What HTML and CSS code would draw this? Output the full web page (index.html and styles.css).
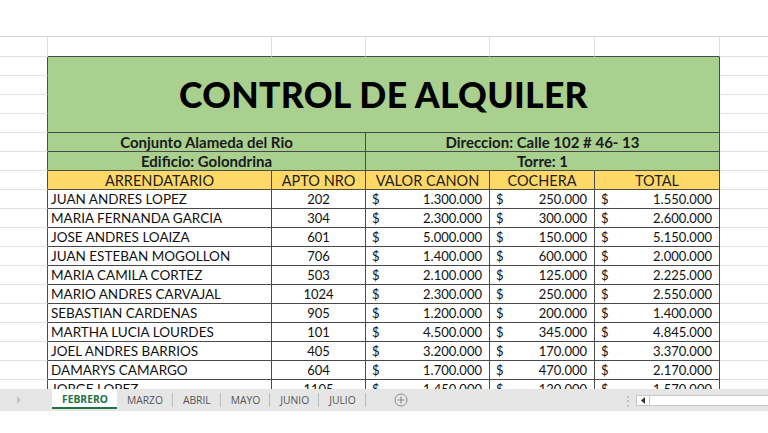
FILE: index.html
```html
<!DOCTYPE html>
<html lang="es">
<head>
<meta charset="utf-8">
<title>Control de alquiler</title>
<link rel="stylesheet" href="styles.css">
</head>
<body>
<div class="top"></div>
<div class="sheet">
<table class="grid">
<colgroup>
<col class="c-g"><col class="c-name"><col class="c-apto"><col class="c-val"><col class="c-coch"><col class="c-tot"><col class="c-g2">
</colgroup>
<tr class="r0"><td class="gut"></td><td class="blank"></td><td class="blank"></td><td class="blank"></td><td class="blank"></td><td class="blank"></td><td class="gut"></td></tr>
<tr><td class="gut edge"></td><td class="c title" colspan="5" rowspan="4">CONTROL DE ALQUILER</td><td class="gut"></td></tr>
<tr><td class="gut edge"></td><td class="gut"></td></tr>
<tr><td class="gut edge"></td><td class="gut"></td></tr>
<tr><td class="gut edge"></td><td class="gut"></td></tr>
<tr><td class="gut edge"></td><td class="c info" colspan="2">Conjunto Alameda del Rio</td><td class="c info" colspan="3">Direccion: Calle 102 # 46- 13</td><td class="gut"></td></tr>
<tr><td class="gut edge"></td><td class="c info" colspan="2">Edificio: Golondrina</td><td class="c info" colspan="3">Torre: 1</td><td class="gut"></td></tr>
<tr><td class="gut edge"></td><td class="c head">ARRENDATARIO</td><td class="c head">APTO NRO</td><td class="c head">VALOR CANON</td><td class="c head">COCHERA</td><td class="c head">TOTAL</td><td class="gut"></td></tr>
<tr><td class="gut edge"></td><td class="c name">JUAN ANDRES LOPEZ</td><td class="c apto">202</td><td class="c"><div class="cur"><span>$</span><span>1.300.000</span></div></td><td class="c"><div class="cur"><span>$</span><span>250.000</span></div></td><td class="c"><div class="cur"><span>$</span><span>1.550.000</span></div></td><td class="gut"></td></tr>
<tr><td class="gut edge"></td><td class="c name">MARIA FERNANDA GARCIA</td><td class="c apto">304</td><td class="c"><div class="cur"><span>$</span><span>2.300.000</span></div></td><td class="c"><div class="cur"><span>$</span><span>300.000</span></div></td><td class="c"><div class="cur"><span>$</span><span>2.600.000</span></div></td><td class="gut"></td></tr>
<tr><td class="gut edge"></td><td class="c name">JOSE ANDRES LOAIZA</td><td class="c apto">601</td><td class="c"><div class="cur"><span>$</span><span>5.000.000</span></div></td><td class="c"><div class="cur"><span>$</span><span>150.000</span></div></td><td class="c"><div class="cur"><span>$</span><span>5.150.000</span></div></td><td class="gut"></td></tr>
<tr><td class="gut edge"></td><td class="c name">JUAN ESTEBAN MOGOLLON</td><td class="c apto">706</td><td class="c"><div class="cur"><span>$</span><span>1.400.000</span></div></td><td class="c"><div class="cur"><span>$</span><span>600.000</span></div></td><td class="c"><div class="cur"><span>$</span><span>2.000.000</span></div></td><td class="gut"></td></tr>
<tr><td class="gut edge"></td><td class="c name">MARIA CAMILA CORTEZ</td><td class="c apto">503</td><td class="c"><div class="cur"><span>$</span><span>2.100.000</span></div></td><td class="c"><div class="cur"><span>$</span><span>125.000</span></div></td><td class="c"><div class="cur"><span>$</span><span>2.225.000</span></div></td><td class="gut"></td></tr>
<tr><td class="gut edge"></td><td class="c name">MARIO ANDRES CARVAJAL</td><td class="c apto">1024</td><td class="c"><div class="cur"><span>$</span><span>2.300.000</span></div></td><td class="c"><div class="cur"><span>$</span><span>250.000</span></div></td><td class="c"><div class="cur"><span>$</span><span>2.550.000</span></div></td><td class="gut"></td></tr>
<tr><td class="gut edge"></td><td class="c name">SEBASTIAN CARDENAS</td><td class="c apto">905</td><td class="c"><div class="cur"><span>$</span><span>1.200.000</span></div></td><td class="c"><div class="cur"><span>$</span><span>200.000</span></div></td><td class="c"><div class="cur"><span>$</span><span>1.400.000</span></div></td><td class="gut"></td></tr>
<tr><td class="gut edge"></td><td class="c name">MARTHA LUCIA LOURDES</td><td class="c apto">101</td><td class="c"><div class="cur"><span>$</span><span>4.500.000</span></div></td><td class="c"><div class="cur"><span>$</span><span>345.000</span></div></td><td class="c"><div class="cur"><span>$</span><span>4.845.000</span></div></td><td class="gut"></td></tr>
<tr><td class="gut edge"></td><td class="c name">JOEL ANDRES BARRIOS</td><td class="c apto">405</td><td class="c"><div class="cur"><span>$</span><span>3.200.000</span></div></td><td class="c"><div class="cur"><span>$</span><span>170.000</span></div></td><td class="c"><div class="cur"><span>$</span><span>3.370.000</span></div></td><td class="gut"></td></tr>
<tr><td class="gut edge"></td><td class="c name">DAMARYS CAMARGO</td><td class="c apto">604</td><td class="c"><div class="cur"><span>$</span><span>1.700.000</span></div></td><td class="c"><div class="cur"><span>$</span><span>470.000</span></div></td><td class="c"><div class="cur"><span>$</span><span>2.170.000</span></div></td><td class="gut"></td></tr>
<tr><td class="gut edge"></td><td class="c name">JORGE LOPEZ</td><td class="c apto">1105</td><td class="c"><div class="cur"><span>$</span><span>1.450.000</span></div></td><td class="c"><div class="cur"><span>$</span><span>120.000</span></div></td><td class="c"><div class="cur"><span>$</span><span>1.570.000</span></div></td><td class="gut"></td></tr>
</table>
</div>
<div class="tabbar">
  <div class="nav"><svg width="6" height="8" viewBox="0 0 6 8"><path d="M1 0 L5 4 L1 8 Z" fill="#c4c4c4"/></svg></div>
  <div class="tab active">FEBRERO</div>
  <div class="tab">MARZO</div>
  <div class="tab">ABRIL</div>
  <div class="tab">MAYO</div>
  <div class="tab">JUNIO</div>
  <div class="tab">JULIO</div>
  <div class="add"><svg width="14" height="14" viewBox="0 0 14 14"><circle cx="7" cy="7" r="6" fill="none" stroke="#8a8a8a" stroke-width="1"/><path d="M7 3.5 V10.5 M3.5 7 H10.5" stroke="#8a8a8a" stroke-width="1.2"/></svg></div>
  <div class="spacer"></div>
  <div class="dots">⋮</div>
  <div class="hscroll">
    <div class="arrow"><svg width="5" height="7" viewBox="0 0 5 7"><path d="M4 0 L0 3.5 L4 7 Z" fill="#333"/></svg></div>
    <div class="track"></div>
  </div>
</div>
</body>
</html>
```
FILE: styles.css
```css
html, body {
  margin: 0;
  padding: 0;
  background: #ffffff;
  overflow: hidden;
}
body {
  font-family: Lato, "Liberation Sans", sans-serif;
  color: #111;
  width: 768px;
  height: 433px;
}
.top {
  height: 36px;
}
.sheet {
  height: 352px;
  border-top: 1px solid #d2d2d2;
  overflow: hidden;
}
.grid {
  border-collapse: separate;
  border-spacing: 0;
  table-layout: fixed;
  width: 768px;
}
.c-g { width: 48px; }
.c-name { width: 224px; }
.c-apto { width: 94px; }
.c-val { width: 124px; }
.c-coch { width: 105px; }
.c-tot { width: 125px; }
.c-g2 { width: 48px; }

.grid td {
  box-sizing: border-box;
  height: 19px;
  padding: 0;
  border-bottom: 1px solid #e1e1e1;
  font-size: 13px;
  line-height: 17px;
  white-space: nowrap;
  overflow: hidden;
}
.grid .r0 td {
  height: 20px;
  border-right: 1px solid #e1e1e1;
}
.grid .r0 td.blank {
  border-bottom-color: #4a4a4a;
}
.grid .r0 td:last-child {
  border-right: none;
}
.grid td.edge {
  border-right: 1px solid #4a4a4a;
}
.grid td.c {
  border-right: 1px solid #4a4a4a;
  border-bottom: 1px solid #4a4a4a;
}
.grid td.title {
  background: #a9d08e;
  text-align: center;
  vertical-align: middle;
  font-size: 35.5px;
  font-weight: 900;
  color: #000;
  line-height: 40px;
  letter-spacing: 0.3px;
}
.grid td.info {
  background: #a9d08e;
  text-align: center;
  font-weight: 700;
  font-size: 15px;
  color: #1a1a1a;
}
.grid td.head {
  background: #ffd966;
  text-align: center;
  font-size: 14.5px;
  color: #222;
}
.grid td.name {
  padding-left: 3px;
  font-size: 13.5px;
}
.apto {
  text-align: center;
}
.cur {
  display: flex;
  justify-content: space-between;
  padding: 0 7px 0 6px;
}

.tabbar {
  height: 22px;
  background: #e6e6e6;
  display: flex;
  align-items: stretch;
  font-family: "Open Sans", "Noto Sans", sans-serif;
  font-size: 10.3px;
  color: #555;
}
.nav {
  width: 52px;
  display: flex;
  align-items: center;
  padding-left: 16px;
  box-sizing: border-box;
}
.tab {
  display: flex;
  align-items: center;
  padding: 0 10px;
  position: relative;
}
.tab::after {
  content: "";
  position: absolute;
  right: 0;
  top: 4px;
  bottom: 4px;
  width: 1px;
  background: #bdbdbd;
}
.tab.active {
  background: #fff;
  color: #217346;
  font-weight: 700;
  box-shadow: inset 0 -2px 0 #217346;
  margin-bottom: 2px;
  padding: 0 9px 0 10px;
}
.tab.active::after {
  display: none;
}
.add {
  display: flex;
  align-items: center;
  padding-left: 28px;
}
.spacer {
  flex: 1;
}
.dots {
  display: flex;
  align-items: center;
  color: #b0b0b0;
  font-size: 12px;
  width: 14px;
}
.hscroll {
  width: 132px;
  display: flex;
  align-self: center;
  height: 11px;
  background: #fff;
  border: 1px solid #c6c6c6;
  border-right: none;
  box-sizing: border-box;
}
.arrow {
  width: 12px;
  display: flex;
  align-items: center;
  justify-content: center;
  border-right: 1px solid #c6c6c6;
}
.track {
  flex: 1;
}
```
